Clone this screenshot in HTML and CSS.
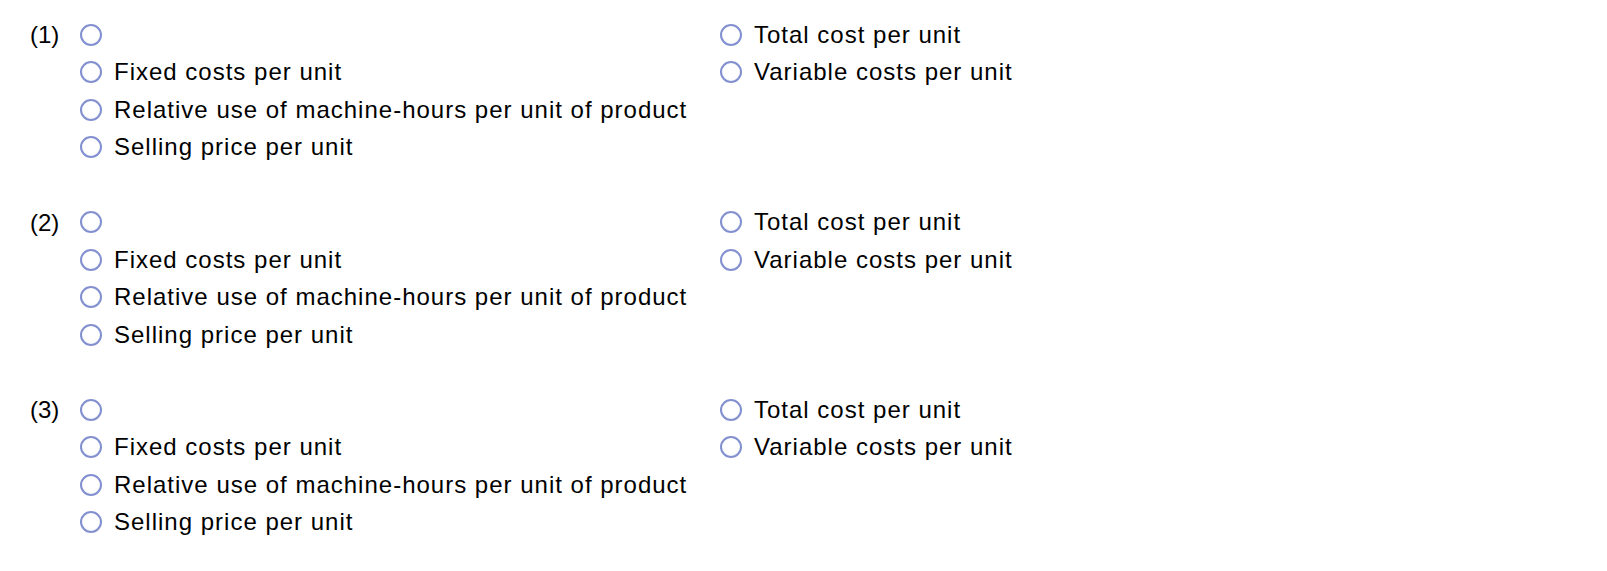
FILE: index.html
```html
<!DOCTYPE html>
<html lang="en">
<head>
    <meta charset="UTF-8">
    <title>Cost questions</title>
<link rel="stylesheet" href="styles.css">
</head>
<body>
    <div class="questions">
        <div class="question">
            <div class="num">(1)</div>
            <div class="options">
                <label class="opt"><span class="radio"></span></label>
                <label class="opt"><span class="radio"></span>Fixed costs per unit</label>
                <label class="opt"><span class="radio"></span>Relative use of machine-hours per unit of product</label>
                <label class="opt"><span class="radio"></span>Selling price per unit</label>
                <label class="opt"><span class="radio"></span>Total cost per unit</label>
                <label class="opt"><span class="radio"></span>Variable costs per unit</label>
            </div>
        </div>
        <div class="question">
            <div class="num">(2)</div>
            <div class="options">
                <label class="opt"><span class="radio"></span></label>
                <label class="opt"><span class="radio"></span>Fixed costs per unit</label>
                <label class="opt"><span class="radio"></span>Relative use of machine-hours per unit of product</label>
                <label class="opt"><span class="radio"></span>Selling price per unit</label>
                <label class="opt"><span class="radio"></span>Total cost per unit</label>
                <label class="opt"><span class="radio"></span>Variable costs per unit</label>
            </div>
        </div>
        <div class="question">
            <div class="num">(3)</div>
            <div class="options">
                <label class="opt"><span class="radio"></span></label>
                <label class="opt"><span class="radio"></span>Fixed costs per unit</label>
                <label class="opt"><span class="radio"></span>Relative use of machine-hours per unit of product</label>
                <label class="opt"><span class="radio"></span>Selling price per unit</label>
                <label class="opt"><span class="radio"></span>Total cost per unit</label>
                <label class="opt"><span class="radio"></span>Variable costs per unit</label>
            </div>
        </div>
    </div>
</body>
</html>
```
FILE: styles.css
```css
body {
    margin: 0;
    padding: 0;
    background: #ffffff;
    font-family: "Liberation Sans", Arial, sans-serif;
    font-size: 24px;
    letter-spacing: 1px;
    color: #000000;
}

.questions {
    padding: 16px 0 0 30px;
}

.question {
    display: flex;
    margin-bottom: 37.5px;
}

.num {
    width: 50px;
    height: 37.5px;
    line-height: 37.5px;
    letter-spacing: 0;
}

.options {
    display: grid;
    grid-template-rows: repeat(4, 37.5px);
    grid-template-columns: 640px auto;
    grid-auto-flow: column;
}

.opt {
    display: flex;
    align-items: center;
    white-space: nowrap;
}

.radio {
    width: 18px;
    height: 18px;
    border: 2px solid #8290d0;
    border-radius: 50%;
    background: radial-gradient(circle at 50% 40%, #ffffff 55%, #eef0f8 100%);
    margin-right: 12px;
    flex-shrink: 0;
}
```
